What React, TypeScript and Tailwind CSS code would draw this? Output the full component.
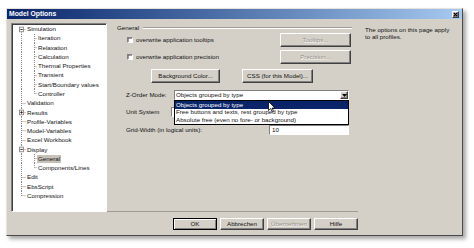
import React from "react";

const FONT: React.CSSProperties = { fontFamily: '"Liberation Sans", Arial, sans-serif' };

type TNode = {
  label: string;
  level: 0 | 1;
  expander?: "-" | "+";
  first?: boolean;
  last?: boolean;
  lastChild?: boolean;
  selected?: boolean;
};

const nodes: TNode[] = [
  { label: "Simulation", level: 0, expander: "-", first: true },
  { label: "Iteration", level: 1 },
  { label: "Relaxation", level: 1 },
  { label: "Calculation", level: 1 },
  { label: "Thermal Properties", level: 1 },
  { label: "Transient", level: 1 },
  { label: "Start/Boundary values", level: 1 },
  { label: "Controller", level: 1, lastChild: true },
  { label: "Validation", level: 0 },
  { label: "Results", level: 0, expander: "+" },
  { label: "Profile-Variables", level: 0 },
  { label: "Model-Variables", level: 0 },
  { label: "Excel Workbook", level: 0 },
  { label: "Display", level: 0, expander: "-" },
  { label: "General", level: 1, selected: true },
  { label: "Components/Lines", level: 1, lastChild: true },
  { label: "Edit", level: 0 },
  { label: "EbsScript", level: 0 },
  { label: "Compression", level: 0, last: true },
];

const RH = 9.28;
const LINE = "#8a8a8a";

function TreeRow({ n }: { n: TNode }) {
  const w = n.level === 0 ? 13 : 24;
  const m = RH / 2;
  return (
    <div className="flex items-center h-[9.28px]">
      <svg width={w} height={RH} className="shrink-0">
        <line x1={8.5} x2={8.5} y1={n.first ? m : 0} y2={n.last ? m : RH} stroke={LINE} strokeWidth={1} strokeDasharray="1 1" />
        {n.level === 0 && <line x1={8.5} x2={13} y1={m} y2={m} stroke={LINE} strokeWidth={1} strokeDasharray="1 1" />}
        {n.level === 1 && (
          <>
            <line x1={21.5} x2={21.5} y1={0} y2={n.lastChild ? m : RH} stroke={LINE} strokeWidth={1} strokeDasharray="1 1" />
            <line x1={21.5} x2={24} y1={m} y2={m} stroke={LINE} strokeWidth={1} strokeDasharray="1 1" />
          </>
        )}
        {n.expander && (
          <g>
            <rect x={6.5} y={m - 2.5} width={4} height={4.6} fill="#fff" stroke="#8a8a8a" strokeWidth={0.9} />
            <line x1={7.3} x2={9.7} y1={m - 0.2} y2={m - 0.2} stroke="#000" strokeWidth={0.8} />
            {n.expander === "+" && <line x1={8.5} x2={8.5} y1={m - 1.4} y2={m + 1} stroke="#000" strokeWidth={0.8} />}
          </g>
        )}
      </svg>
      <span className={n.selected ? "px-[1px] leading-[8px] bg-[#c6c2ba]" : "px-[1px] leading-[8px]"}>{n.label}</span>
    </div>
  );
}

const raised =
  "border border-t-white border-l-white border-r-[#404040] border-b-[#404040] shadow-[inset_-1px_-1px_0_#808080] bg-[#d4d0c8]";
const sunken =
  "border border-t-[#808080] border-l-[#808080] border-r-white border-b-white bg-white";
const disabledText = "text-[#938f87] [text-shadow:0.5px_0.5px_0_#ffffff]";

function Btn({ children, w, disabled, def }: { children: React.ReactNode; w: string; disabled?: boolean; def?: boolean }) {
  if (def) {
    return (
      <div className={`${w} h-[12px] border border-black bg-[#d4d0c8] shadow-[inset_1px_1px_0_#ffffff,inset_-1px_-1px_0_#808080] flex items-center justify-center leading-none`}>
        {children}
      </div>
    );
  }
  return (
    <div className={`${w} ${raised} flex items-center justify-center leading-none ${disabled ? disabledText : ""}`}>{children}</div>
  );
}

function Check() {
  return <div className={`w-[6px] h-[6px] shrink-0 ${sunken} shadow-[inset_0.5px_0.5px_0_#404040]`} />;
}

function DropArrow() {
  return (
    <div className={`w-[8px] h-full ${raised} flex items-center justify-center`}>
      <svg width="5" height="3" viewBox="0 0 5 3">
        <path d="M0 0 L5 0 L2.5 3 Z" fill="#000" />
      </svg>
    </div>
  );
}

export default function App() {
  return (
    <div className="w-[474px] h-[248px] bg-white pl-[6px] pt-[8px] text-[#111] text-[6.2px]" style={FONT}>
      <div className="w-[457px] h-[228px] bg-[#d4d0c8] border border-t-[#e6e3dc] border-l-[#e6e3dc] border-r-[#4a4a4a] border-b-[#4a4a4a] shadow-[3px_3px_4px_rgba(0,0,0,0.35)] flex flex-col">
        {/* Title bar */}
        <div className="h-[10px] shrink-0 flex items-center justify-between bg-gradient-to-r from-[#0a246a] to-[#a6caf0] pl-[2px] pr-[3px]">
          <span className="text-[6.8px] font-bold text-white leading-none">Model Options</span>
          <div className={`w-[7px] h-[7px] ${raised} flex items-center justify-center`}>
            <svg width="5" height="5" viewBox="0 0 5 5">
              <path d="M0.8 0.8 L4.2 4.2 M4.2 0.8 L0.8 4.2" stroke="#000" strokeWidth="1.2" />
            </svg>
          </div>
        </div>

        {/* Body */}
        <div className="flex pt-[4px] pl-[4px]">
          <div className="flex flex-col w-[347px]">
            <div className="flex h-[189px]">
              {/* Tree */}
              <div className={`w-[96px] h-full ${sunken} shadow-[inset_1px_1px_0_#404040] pt-[0.5px] pl-[1px] leading-none`}>
                {nodes.map((n) => (
                  <TreeRow key={n.label} n={n} />
                ))}
              </div>

              {/* Page */}
              <div className="w-[251px] h-full border-b border-b-[#a09c94] pl-[10px] pr-[6px] flex flex-col leading-none">
                {/* group header */}
                <div className="h-[8px] mt-[1px] flex items-center">
                  <span>General</span>
                  <div className="flex-1 ml-[4px] h-[2px] border-t border-t-[#a09c94] border-b border-b-white" />
                </div>

                {/* row 1 */}
                <div className="h-[14px] mt-[1px] flex items-center justify-between">
                  <div className="flex items-center ml-[10px] gap-[3px]">
                    <Check />
                    <span>overwrite application tooltips</span>
                  </div>
                  <div className={`w-[71px] h-[14px] mr-[1px] ${raised} flex items-center justify-center ${disabledText}`}>Tooltips...</div>
                </div>

                {/* row 2 */}
                <div className="h-[14px] mt-[3px] flex items-center justify-between">
                  <div className="flex items-center ml-[10px] gap-[3px]">
                    <Check />
                    <span>overwrite application precision</span>
                  </div>
                  <div className={`w-[71px] h-[14px] mr-[1px] ${raised} flex items-center justify-center ${disabledText}`}>Precision...</div>
                </div>

                {/* row 3 */}
                <div className="h-[14px] mt-[5px] flex items-center">
                  <div className={`ml-[34px] w-[69px] h-[14px] ${raised} flex items-center justify-center`}>Background Color...</div>
                  <div className={`ml-[22px] w-[71px] h-[14px] ${raised} flex items-center justify-center`}>CSS (for this Model)...</div>
                </div>

                {/* Z-Order */}
                <div className="h-[10px] mt-[7px] flex items-center pl-[9px]">
                  <span className="w-[48px]">Z-Order Mode:</span>
                  <div className="relative w-[175px] h-[10px] z-10">
                    <div className={`w-full h-full ${sunken} flex items-center justify-between`}>
                      <span className="pl-[1px]">Objects grouped by type</span>
                      <DropArrow />
                    </div>
                    {/* dropdown list */}
                    <div className="absolute left-0 top-[10px] w-[175px] border border-black bg-white flex flex-col">
                      <div className="h-[7.6px] flex items-center px-[1px] bg-[#0a246a] text-white">Objects grouped by type</div>
                      <div className="h-[7.6px] flex items-center px-[1px]">Free buttons and texts, rest grouped by type</div>
                      <div className="h-[7.6px] flex items-center px-[1px]">Absolute free (even no fore- or background)</div>
                    </div>
                    {/* cursor */}
                    <svg className="absolute left-[94px] top-[11px]" width="8" height="12" viewBox="0 0 8 12">
                      <path d="M0.5 0.5 L0.5 9.5 L2.7 7.5 L4.2 10.8 L5.5 10.2 L4.1 7 L7 7 Z" fill="#fff" stroke="#000" strokeWidth="0.8" strokeLinejoin="round" />
                    </svg>
                  </div>
                </div>

                {/* Unit System */}
                <div className="h-[10px] mt-[7px] flex items-center pl-[9px]">
                  <span className="w-[45px]">Unit System</span>
                  <div className={`w-[178px] h-[10px] ${sunken}`} />
                </div>

                {/* Grid width */}
                <div className="h-[10px] mt-[8px] flex items-center pl-[9px] pr-[3px]">
                  <span className="flex-1">Grid-Width (in logical units):</span>
                  <div className={`w-[80px] h-[10px] ${sunken} flex items-center pl-[2px]`}>10</div>
                </div>
              </div>
            </div>

            {/* bottom buttons */}
            <div className="mt-[6px] flex justify-end gap-[3px]">
              <Btn w="w-[44px] h-[12px]" def>OK</Btn>
              <Btn w="w-[44px] h-[12px]">Abbrechen</Btn>
              <Btn w="w-[44px] h-[12px]" disabled>Übernehmen</Btn>
              <Btn w="w-[44px] h-[12px]">Hilfe</Btn>
            </div>
          </div>

          {/* info text */}
          <div className="ml-[7px] w-[88px] pt-[2.5px] leading-[7px]">
            The options on this page apply to all profiles.
          </div>
        </div>
      </div>
    </div>
  );
}
